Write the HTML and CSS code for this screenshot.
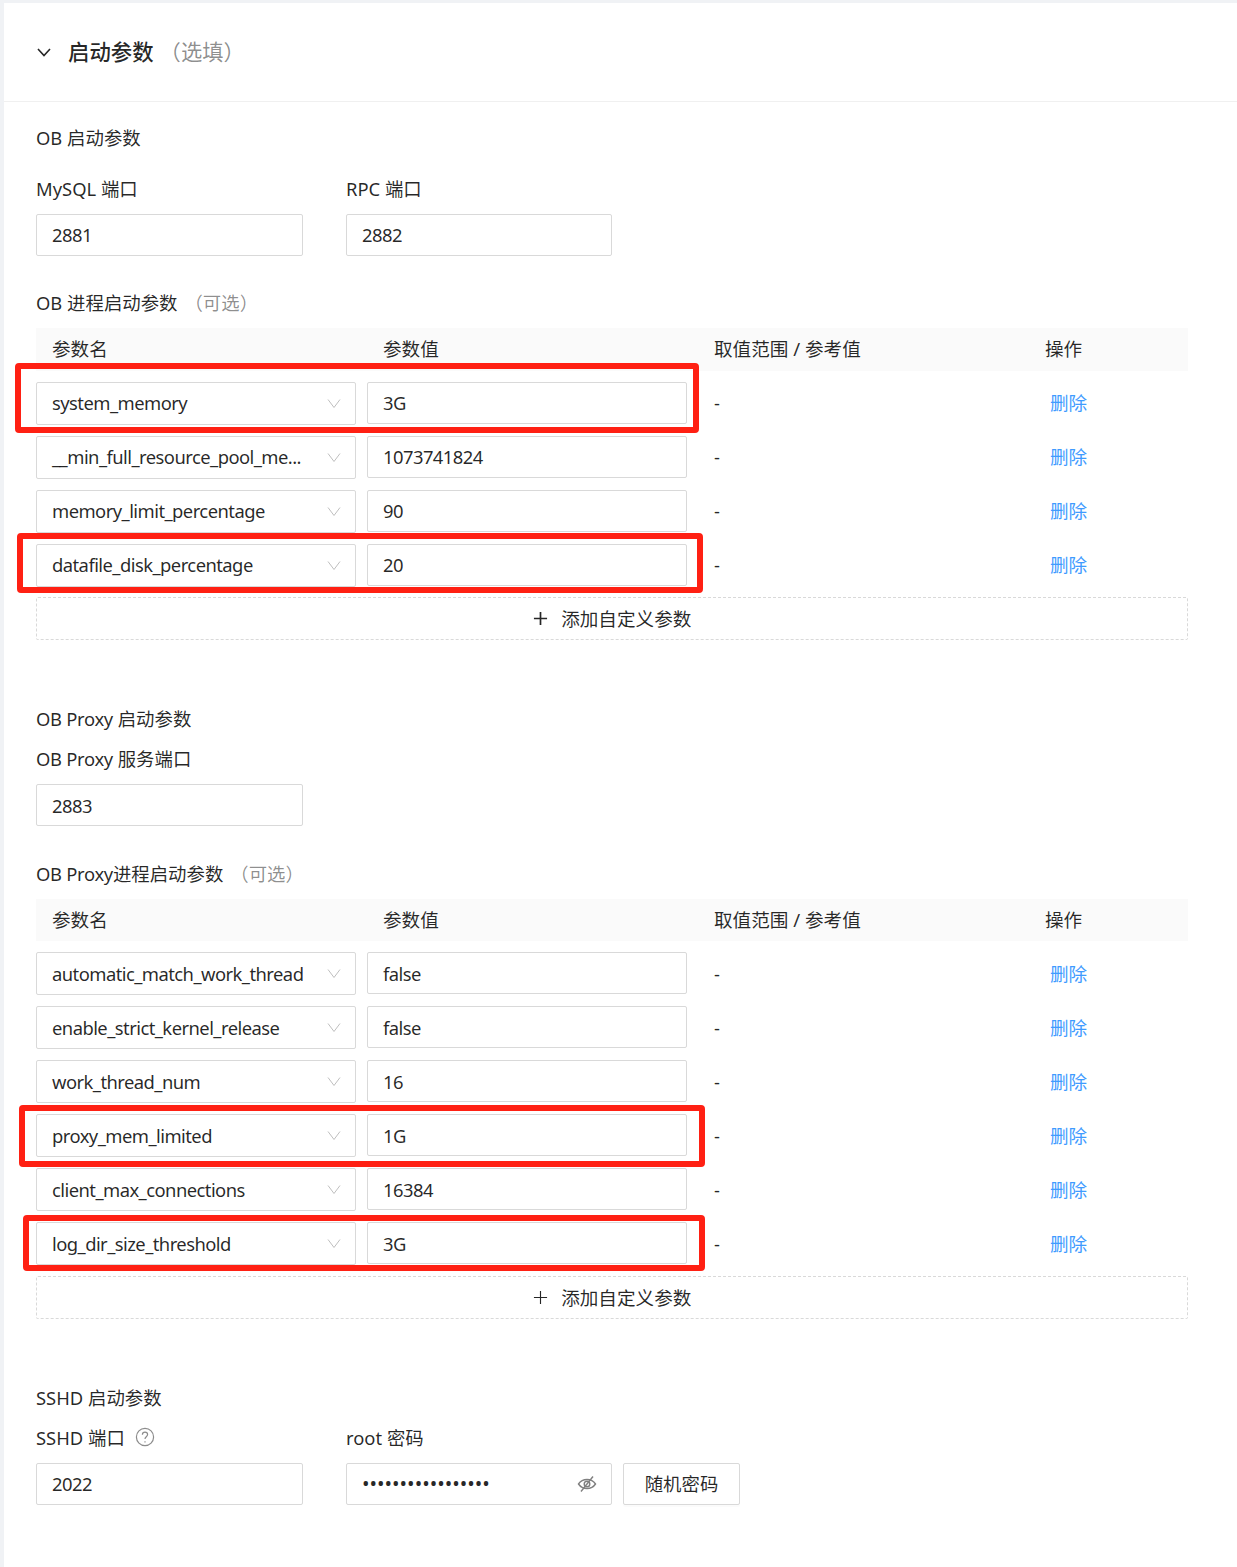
FILE: index.html
```html
<!DOCTYPE html>
<html lang="zh-CN">
<head>
<meta charset="utf-8">
<title>启动参数</title>
<link rel="stylesheet" href="styles.css">
</head>
<body>
<main class="card">
  <header class="card-head">
    <svg class="chev-big" viewBox="0 0 16 16"><path d="M2 5l6 6.5L14 5" /></svg>
    <h2 class="title">启动参数</h2>
    <span class="title-opt">（选填）</span>
  </header>
  <div class="card-body">
    <div class="section-title s-ob">OB 启动参数</div>
    <div class="fields f-ob">
      <div class="field"><label class="label">MySQL 端口</label><div class="input">2881</div></div>
      <div class="field"><label class="label">RPC 端口</label><div class="input">2882</div></div>
    </div>
    <div class="section-title s-obp">OB 进程启动参数<span class="opt">（可选）</span></div>
    <div class="table">
      <div class="thead"><span>参数名</span><span>参数值</span><span>取值范围 / 参考值</span><span>操作</span></div>
      <div class="tbody">
        <div class="row"><div class="select">system_memory<svg class="chev" viewBox="0 0 16 16"><path d="M2 4.5l6 8 6-8"/></svg></div><div class="input">3G</div><span class="dash">-</span><a class="del">删除</a><i class="mark m1"></i></div>
        <div class="row"><div class="select">__min_full_resource_pool_me...<svg class="chev" viewBox="0 0 16 16"><path d="M2 4.5l6 8 6-8"/></svg></div><div class="input">1073741824</div><span class="dash">-</span><a class="del">删除</a></div>
        <div class="row"><div class="select">memory_limit_percentage<svg class="chev" viewBox="0 0 16 16"><path d="M2 4.5l6 8 6-8"/></svg></div><div class="input">90</div><span class="dash">-</span><a class="del">删除</a></div>
        <div class="row"><div class="select">datafile_disk_percentage<svg class="chev" viewBox="0 0 16 16"><path d="M2 4.5l6 8 6-8"/></svg></div><div class="input">20</div><span class="dash">-</span><a class="del">删除</a><i class="mark m2"></i></div>
      </div>
      <div class="add"><svg class="plus" viewBox="0 0 16 16"><path d="M8 1v14M1 8h14"/></svg>添加自定义参数</div>
    </div>
    <div class="section-title s-proxy"><span class="lat">OB Proxy</span> 启动参数</div>
    <div class="fields f-proxy">
      <div class="field field-low"><label class="label"><span class="lat">OB Proxy</span>&nbsp;服务端口</label><div class="input">2883</div></div>
    </div>
    <div class="section-title s-obp2"><span class="lat">OB Proxy</span>进程启动参数<span class="opt">（可选）</span></div>
    <div class="table table-b">
      <div class="thead"><span>参数名</span><span>参数值</span><span>取值范围 / 参考值</span><span>操作</span></div>
      <div class="tbody">
        <div class="row"><div class="select">automatic_match_work_thread<svg class="chev" viewBox="0 0 16 16"><path d="M2 4.5l6 8 6-8"/></svg></div><div class="input">false</div><span class="dash">-</span><a class="del">删除</a></div>
        <div class="row"><div class="select">enable_strict_kernel_release<svg class="chev" viewBox="0 0 16 16"><path d="M2 4.5l6 8 6-8"/></svg></div><div class="input">false</div><span class="dash">-</span><a class="del">删除</a></div>
        <div class="row"><div class="select">work_thread_num<svg class="chev" viewBox="0 0 16 16"><path d="M2 4.5l6 8 6-8"/></svg></div><div class="input">16</div><span class="dash">-</span><a class="del">删除</a></div>
        <div class="row"><div class="select">proxy_mem_limited<svg class="chev" viewBox="0 0 16 16"><path d="M2 4.5l6 8 6-8"/></svg></div><div class="input">1G</div><span class="dash">-</span><a class="del">删除</a><i class="mark m3"></i></div>
        <div class="row"><div class="select">client_max_connections<svg class="chev" viewBox="0 0 16 16"><path d="M2 4.5l6 8 6-8"/></svg></div><div class="input">16384</div><span class="dash">-</span><a class="del">删除</a></div>
        <div class="row"><div class="select">log_dir_size_threshold<svg class="chev" viewBox="0 0 16 16"><path d="M2 4.5l6 8 6-8"/></svg></div><div class="input">3G</div><span class="dash">-</span><a class="del">删除</a><i class="mark m4"></i></div>
      </div>
      <div class="add"><svg class="plus thin" viewBox="0 0 16 16"><path d="M8 1v14M1 8h14"/></svg>添加自定义参数</div>
    </div>
    <div class="section-title s-proxy">SSHD 启动参数</div>
    <div class="fields f-proxy">
      <div class="field"><label class="label">SSHD 端口<svg class="help" viewBox="0 0 20 20"><circle cx="10" cy="10" r="8.6"/><path d="M7.4 7.8c0-1.500 1.200-2.600 2.600-2.600s2.600 1 2.600 2.400c0 2.100-2.600 2.200-2.600 4.300"/><path d="M10 14.200v1.300"/></svg></label><div class="input">2022</div></div>
      <div class="field"><label class="label">root 密码</label>
        <div class="pwd-line">
          <div class="input pwd"><span class="dots">•••••••••••••••••</span><svg class="eye" viewBox="0 0 20 20"><path d="M1.500 10c2-3 5-4.500 8.500-4.500s6.500 1.500 8.500 4.500c-2 3-5 4.500-8.500 4.500S3.500 13 1.500 10z"/><circle cx="10" cy="10" r="2.800"/><path d="M16 2.500L4 17.500"/></svg></div>
          <button class="btn">随机密码</button>
        </div>
      </div>
    </div>
  </div>
</main>
</body>
</html>
```

FILE: styles.css
```css
* { box-sizing: border-box; }
html, body { margin: 0; padding: 0; }
body {
  background: #f0f2f5;
  padding: 3px 0 0 4px;
  font-family: "Noto Sans", "Noto Sans CJK SC", sans-serif;
  font-size: 18.4px;
  line-height: 26px;
  color: rgba(0, 0, 0, .85);
}
.card { background: #fff; height: 1564px; }
.card-head {
  height: 99px;
  border-bottom: 1px solid #f0f0f0;
  padding: 0 32px;
  display: flex;
  align-items: center;
}
.chev-big { width: 16px; height: 16px; fill: none; stroke: #262626; stroke-width: 1.6; margin-right: 16px; }
.title { margin: 0; font-size: 21.4px; font-weight: 500; line-height: 30px; }
.title-opt { font-size: 21.3px; color: rgba(0, 0, 0, .45); margin-left: 6px; }
.card-body { padding: 0 49px 0 32px; }
.section-title { line-height: 26px; }
.lat { letter-spacing: -.3px; }
.s-ob { margin-top: 23px; }
.fields { display: flex; gap: 43px; }
.f-ob { margin-top: 25px; }
.f-proxy { margin-top: 14px; }
.field { width: 267px; }
.field + .field { width: 266px; }
.label { display: flex; align-items: center; height: 26px; margin-bottom: 12px; }
.input {
  height: 42px;
  line-height: 40px;
  border: 1px solid #d9d9d9;
  border-radius: 2px;
  padding: 0 15px;
  background: #fff;
  letter-spacing: -.55px;
}
.field-low .input { line-height: 42px; }
.s-obp { margin-top: 34px; }
.s-obp2 { margin-top: 35px; }
.opt { color: rgba(0, 0, 0, .45); margin-left: 7px; }
.table { margin-top: 12px; width: 1152px; }
.thead {
  display: grid;
  grid-template-columns: repeat(3, 331px) 1fr;
  height: 43px;
  line-height: 41px;
  background: #fafafa;
  font-size: 18.6px;
}
.table-b .thead { height: 42px; }
.thead span { padding-left: 16px; }
.tbody { padding-top: 5px; }
.row {
  position: relative;
  display: grid;
  grid-template-columns: 320px 320px 331px 1fr;
  column-gap: 11px;
  height: 54px;
  align-items: start;
  padding-top: 6px;
}
.select {
  position: relative;
  height: 43px;
  line-height: 40px;
  border: 1px solid #d9d9d9;
  border-radius: 2px;
  padding: 0 15px;
  white-space: nowrap;
  overflow: hidden;
  letter-spacing: -.55px;
}
.table-b .select, .table-b .input { line-height: 42px; }
.chev { position: absolute; right: 13px; top: 12px; width: 16px; height: 16px; fill: none; stroke: #bfbfbf; stroke-width: 1; }
.dash { padding-left: 16px; line-height: 42px; }
.del { color: #3f9bff; padding-left: 5px; justify-self: start; line-height: 42px; margin-left: 5px; font-size: 18.6px; }
.table-b .del, .table-b .dash { line-height: 44px; }
.mark { position: absolute; border: 6px solid #ff2013; border-radius: 4px; pointer-events: none; }
.m1 { left: -21px; top: -13px; width: 684px; height: 70px; }
.m2 { left: -19px; top: -5px; width: 686px; height: 60px; }
.m3 { left: -17px; top: -3px; width: 686px; height: 62px; }
.m4 { left: -13px; top: -1px; width: 682px; height: 56px; }
.add {
  margin-top: 5px;
  height: 43px;
  border: 1px dashed #d9d9d9;
  border-radius: 2px;
  display: flex;
  align-items: center;
  justify-content: center;
  font-size: 18.6px;
}
.table-b .add { margin-top: 6px; }
.plus { width: 15px; height: 15px; margin-right: 13.500px; fill: none; stroke: #262626; stroke-width: 1.8; }
.plus.thin { stroke-width: 1.2; }
.s-proxy { margin-top: 66px; }
.help { width: 20px; height: 20px; margin-left: 10px; margin-top: -2px; fill: none; stroke: #8c8c8c; stroke-width: 1.2; }
.pwd-line { display: flex; gap: 11px; width: 394px; }
.pwd { flex: 0 0 266px; display: flex; align-items: center; justify-content: space-between; padding-right: 14px; }
.dots { font-size: 20px; letter-spacing: 0; }
.eye { width: 20px; height: 20px; fill: none; stroke: #808080; stroke-width: 1.4; }
.btn {
  flex: 0 0 117px;
  height: 42px;
  background: #fff;
  border: 1px solid #d9d9d9;
  border-radius: 2px;
  box-shadow: 0 2px 0 rgba(0, 0, 0, .015);
  font: inherit;
  color: inherit;
  padding: 0;
}
```
